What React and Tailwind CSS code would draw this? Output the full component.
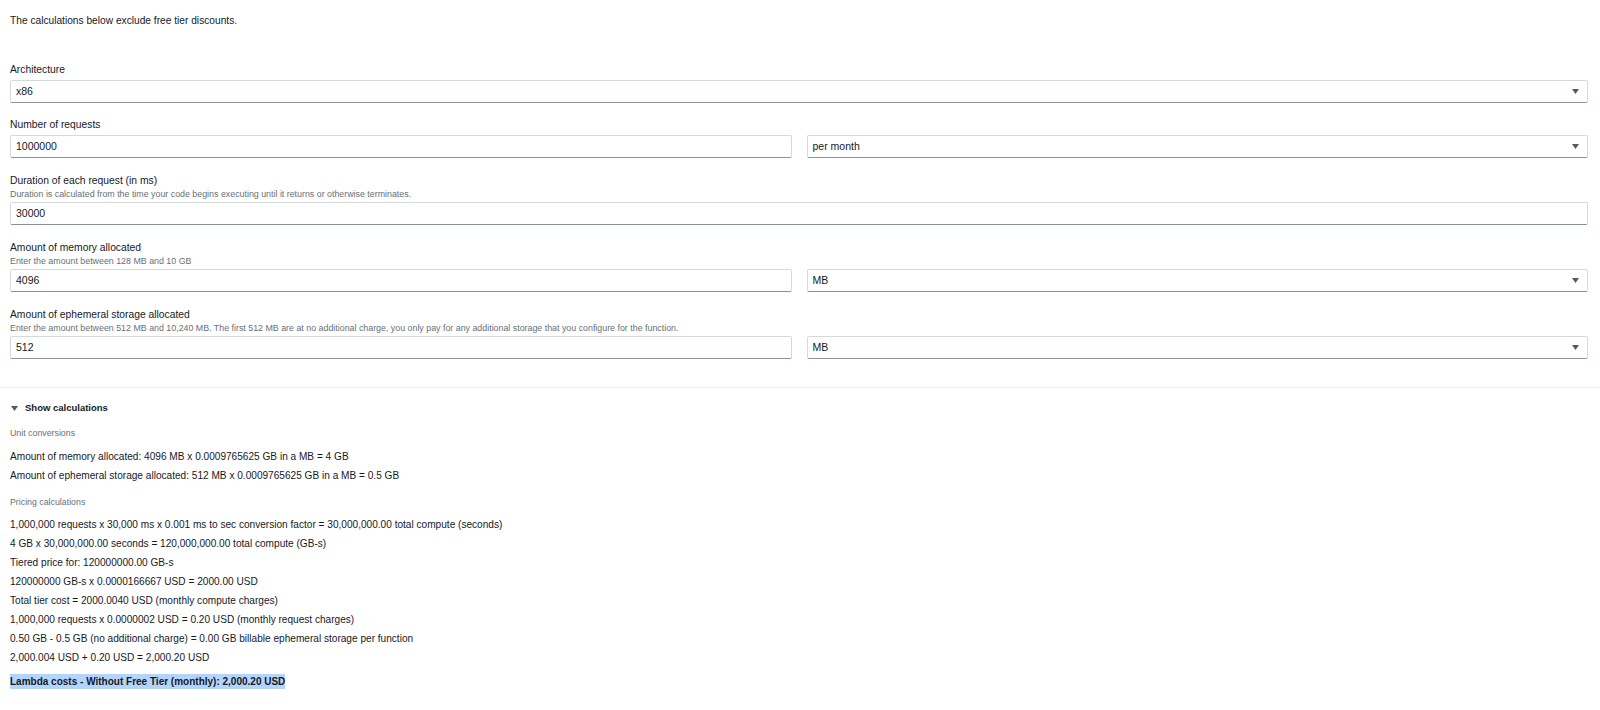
import React from 'react';

const font = { fontFamily: '"Liberation Sans", Arial, sans-serif' };

function Caret({ className = '' }) {
  return (
    <svg width="7" height="5" viewBox="0 0 7 5" className={className}>
      <path d="M0 0 L7 0 L3.5 5 Z" fill="#545b64" />
    </svg>
  );
}

function Box({ value, select = false }) {
  return (
    <div className="h-[23px] flex items-center justify-between bg-white border border-[#d5dbdb] border-b-[#879596] rounded-[2px] pl-[5px] pr-[8px] text-[10.5px] text-[#16191f]">
      <span>{value}</span>
      {select && <Caret />}
    </div>
  );
}

function Field({ label, desc, children, className = '' }) {
  return (
    <div className={className}>
      <div className="h-[14px] leading-[14px] text-[10.3px] text-[#16191f]">{label}</div>
      {desc && <div className="h-[12px] leading-[12px] text-[8.85px] text-[#687078]">{desc}</div>}
      <div className={desc ? 'mt-[2px]' : 'mt-[3px]'}>{children}</div>
    </div>
  );
}

const pricing = [
  '1,000,000 requests x 30,000 ms x 0.001 ms to sec conversion factor = 30,000,000.00 total compute (seconds)',
  '4 GB x 30,000,000.00 seconds = 120,000,000.00 total compute (GB-s)',
  'Tiered price for: 120000000.00 GB-s',
  '120000000 GB-s x 0.0000166667 USD = 2000.00 USD',
  'Total tier cost = 2000.0040 USD (monthly compute charges)',
  '1,000,000 requests x 0.0000002 USD = 0.20 USD (monthly request charges)',
  '0.50 GB - 0.5 GB (no additional charge) = 0.00 GB billable ephemeral storage per function',
  '2,000.004 USD + 0.20 USD = 2,000.20 USD',
];

export default function App() {
  return (
    <div style={font} className="w-[1600px] h-[710px] bg-white overflow-hidden">
      <div className="pl-[10px] pr-[12px] pt-[14px]">
        <div className="h-[14px] leading-[14px] text-[10.2px] text-[#16191f]">
          The calculations below exclude free tier discounts.
        </div>

        <Field label="Architecture" className="mt-[35px]">
          <Box value="x86" select />
        </Field>

        <Field label="Number of requests" className="mt-[15px]">
          <div className="grid grid-cols-2 gap-[15px]">
            <Box value="1000000" />
            <Box value="per month" select />
          </div>
        </Field>

        <Field
          label="Duration of each request (in ms)"
          desc="Duration is calculated from the time your code begins executing until it returns or otherwise terminates."
          className="mt-[16px]"
        >
          <Box value="30000" />
        </Field>

        <Field
          label="Amount of memory allocated"
          desc="Enter the amount between 128 MB and 10 GB"
          className="mt-[16px]"
        >
          <div className="grid grid-cols-2 gap-[15px]">
            <Box value="4096" />
            <Box value="MB" select />
          </div>
        </Field>

        <Field
          label="Amount of ephemeral storage allocated"
          desc="Enter the amount between 512 MB and 10,240 MB. The first 512 MB are at no additional charge, you only pay for any additional storage that you configure for the function."
          className="mt-[16px]"
        >
          <div className="grid grid-cols-2 gap-[15px]">
            <Box value="512" />
            <Box value="MB" select />
          </div>
        </Field>
      </div>

      <div className="mt-[28px] border-t border-[#eaeded]" />

      <div className="pl-[11px] pt-[13px]">
        <div className="flex items-center gap-[7px] h-[14px] text-[9.5px] font-bold text-[#16191f]">
          <Caret />
          <span>Show calculations</span>
        </div>
      </div>

      <div className="pl-[10px]">
        <div className="mt-[12px] h-[12px] leading-[12px] text-[8.8px] text-[#687078]">Unit conversions</div>
        <div className="mt-[8px] text-[10.1px] leading-[19px] text-[#16191f]">
          <div>Amount of memory allocated: 4096 MB x 0.0009765625 GB in a MB = 4 GB</div>
          <div>Amount of ephemeral storage allocated: 512 MB x 0.0009765625 GB in a MB = 0.5 GB</div>
        </div>

        <div className="mt-[11px] h-[12px] leading-[12px] text-[8.8px] text-[#687078]">Pricing calculations</div>
        <div className="mt-[7px] text-[10.1px] leading-[19px] text-[#16191f]">
          {pricing.map((line) => (
            <div key={line}>{line}</div>
          ))}
        </div>

        <div className="mt-[7px] flex">
          <span className="h-[15px] leading-[15px] bg-[#b3d4fc] text-[10px] font-bold text-[#16191f]">
            Lambda costs - Without Free Tier (monthly): 2,000.20 USD
          </span>
        </div>
      </div>
    </div>
  );
}
